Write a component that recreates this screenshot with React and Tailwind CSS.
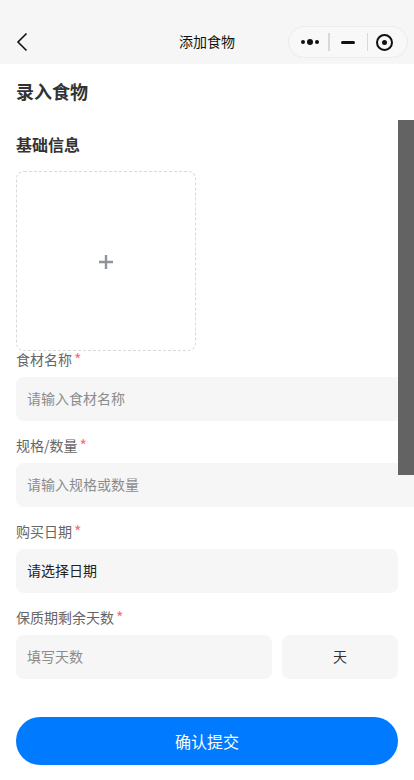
import React from "react";

const font = { fontFamily: '"Noto Sans CJK SC", "Liberation Sans", sans-serif' };

function Label({ children }) {
  return (
    <div className="flex h-[18px] items-center pb-[2px] text-[14px] leading-[18px] text-[#666666]">
      <span>{children}</span>
      <span className="ml-[2px] text-[16px] text-[#ff6b70]">*</span>
    </div>
  );
}

function Field({ label, placeholder, wide, dark, top = "mt-[16px]" }) {
  return (
    <div className={top}>
      <Label>{label}</Label>
      <div
        className={`mt-[8px] flex h-[44px] items-center bg-[#f6f6f6] px-[11px] pb-[1px] text-[14px] ${
          wide ? "w-[414px] rounded-l-[8px]" : "rounded-[8px]"
        } ${dark ? "text-[#222222]" : "text-[#8c8c8c]"}`}
      >
        {placeholder}
      </div>
    </div>
  );
}

export default function App() {
  return (
    <div className="relative h-[780px] w-[414px] overflow-hidden bg-white" style={font}>
      <header className="relative h-[64px] bg-[#f6f6f6]">
        <svg width="12" height="20" viewBox="0 0 12 20" fill="none" className="absolute left-[16px] top-[32px]">
          <path d="M10.5 1.5 L2 10 L10.5 18.5" stroke="#111" strokeWidth="1.6" />
        </svg>
        <div className="absolute left-0 right-0 top-[30px] text-center text-[14px] leading-[22px] text-[#111111]">添加食物</div>
        <div className="absolute left-[288px] top-[26px] flex h-[32px] w-[120px] items-center rounded-full border border-[#ececec] bg-[#f8f8f8]">
          <div className="flex w-[39px] items-center justify-center gap-[2px] pl-[3px]">
            <span className="h-[4px] w-[4px] rounded-full bg-[#111]" />
            <span className="h-[6px] w-[6px] rounded-full bg-[#111]" />
            <span className="h-[4px] w-[4px] rounded-full bg-[#111]" />
          </div>
          <span className="h-[18px] w-[1.5px] bg-[#d8d8d8]" />
          <div className="flex w-[37px] items-center justify-center">
            <span className="h-[3px] w-[14px] rounded-full bg-[#111]" />
          </div>
          <span className="h-[18px] w-[1.5px] bg-[#d8d8d8]" />
          <div className="flex flex-1 items-center justify-center pr-[7px]">
            <span className="flex h-[17px] w-[17px] items-center justify-center rounded-full border-[2px] border-[#111]">
              <span className="h-[5px] w-[5px] rounded-full bg-[#111]" />
            </span>
          </div>
        </div>
      </header>

      <main className="px-[16px]">
        <h1 className="mt-[14px] text-[18px] font-bold leading-[26px] text-[#333333]">录入食物</h1>
        <h2 className="mt-[28px] text-[16px] font-bold leading-[24px] text-[#333333]">基础信息</h2>
        <div className="mt-[15px] flex h-[180px] w-[180px] items-center justify-center rounded-[8px] border border-dashed border-[#d9d9d9] pt-[2px]">
          <svg width="16" height="16" viewBox="0 0 16 16">
            <path d="M8 1 V15 M1 8 H15" stroke="#8f949c" strokeWidth="2.4" />
          </svg>
        </div>

        <Field label="食材名称" placeholder="请输入食材名称" wide top="mt-0" />
        <Field label="规格/数量" placeholder="请输入规格或数量" wide />
        <Field label="购买日期" placeholder="请选择日期" dark />

        <div className="mt-[16px]">
          <Label>保质期剩余天数</Label>
          <div className="mt-[8px] flex gap-[10px]">
            <div className="flex h-[44px] flex-1 items-center rounded-[8px] bg-[#f6f6f6] px-[11px] pb-[1px] text-[14px] text-[#8c8c8c]">
              填写天数
            </div>
            <div className="flex h-[44px] w-[116px] items-center justify-center rounded-[8px] bg-[#f6f6f6] pb-[1px] text-[14px] text-[#333333]">
              天
            </div>
          </div>
        </div>

        <button className="mt-[38px] flex h-[48px] w-full items-center justify-center rounded-full bg-[#007aff] text-[16px] text-white">
          确认提交
        </button>
      </main>

      <div className="absolute right-0 top-[120px] h-[355px] w-[16px] bg-[#636363]" />
    </div>
  );
}
